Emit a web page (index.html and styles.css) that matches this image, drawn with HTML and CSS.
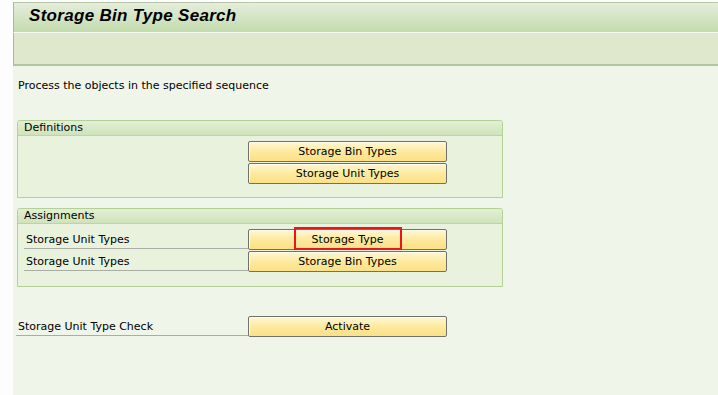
FILE: index.html
```html
<!DOCTYPE html>
<html lang="en">

<head>
    <meta charset="UTF-8">
    <meta name="viewport" content="width=device-width, initial-scale=1.0">
    <title>Storage Bin Type Search</title>

    <link rel="stylesheet" href="styles.css">
</head>

<body>
    <div class="gutter"></div>

    <div class="screen">
        <div class="title-bar">
            <h1>Storage Bin Type Search</h1>
        </div>
        <div class="toolbar"></div>

        <div class="content">
            <p class="intro">Process the objects in the specified sequence</p>

            <fieldset class="group">
                <legend>Definitions</legend>
                <ul>
                    <li>
                        <span class="spacer"></span>
                        <button>Storage Bin Types</button>
                    </li>
                    <li>
                        <span class="spacer"></span>
                        <button>Storage Unit Types</button>
                    </li>
                </ul>
            </fieldset>

            <fieldset class="group assignments">
                <legend>Assignments</legend>
                <ul>
                    <li>
                        <label>Storage Unit Types</label>
                        <button><span class="highlight">Storage Type</span></button>
                    </li>
                    <li>
                        <label>Storage Unit Types</label>
                        <button>Storage Bin Types</button>
                    </li>
                </ul>
            </fieldset>

            <div class="check-row">
                <label>Storage Unit Type Check</label>
                <button>Activate</button>
            </div>
        </div>
    </div>
</body>

</html>
```

FILE: styles.css
```css
* {
    margin: 0;
    padding: 0;
    box-sizing: border-box;
}

body {
    height: 100vh;
    display: flex;
    background-color: #ffffff;
    font-family: "DejaVu Sans", "Liberation Sans", sans-serif;
    font-size: 11px;
    color: #000000;
    overflow: hidden;
}

ul {
    list-style: none;
}

.gutter {
    width: 13px;
    flex-shrink: 0;
    background-color: #fcfdfc;
}

.screen {
    flex: 1;
    display: flex;
    flex-direction: column;
    background-color: #eff5e9;
    margin-top: 2px;
}

.title-bar {
    height: 31px;
    border-top: 1px solid #b6c7a7;
    border-left: 1px solid #a8bb98;
    border-bottom: 1px solid #f4f8ee;
    background: linear-gradient(#e4eddb, #c3dbad);
    display: flex;
    align-items: center;
    padding-left: 15px;
    padding-bottom: 3px;
}

h1 {
    font-family: "Liberation Sans", sans-serif;
    font-size: 17px;
    font-weight: bold;
    font-style: italic;
    letter-spacing: 0.3px;
}

.toolbar {
    height: 33px;
    background-color: #dfe7cd;
    border-left: 1px solid #a8bb98;
    border-bottom: 2px solid #b3c5a1;
}

.content {
    flex: 1;
    padding: 13px 0 0 3px;
    display: flex;
    flex-direction: column;
}

.intro {
    padding-left: 2px;
    line-height: 14px;
}

.group {
    width: 486px;
    margin: 27px 0 0 1px;
    border: 1px solid #b3d196;
    border-radius: 3px 3px 0 0;
    background-color: #e9f2dd;
    padding: 20px 0 13px 0;
    position: relative;
}

.group legend {
    position: absolute;
    top: 0;
    left: 0;
    right: 0;
    height: 15px;
    padding-left: 6px;
    line-height: 14px;
    background: linear-gradient(#e4efd6, #cfe3b9);
    border-bottom: 1px solid #bcd6a2;
    border-radius: 3px 3px 0 0;
}

.group.assignments {
    margin-top: 10px;
    padding-bottom: 14px;
}

.group ul {
    display: flex;
    flex-direction: column;
    gap: 1px;
}

.group li {
    display: flex;
    align-items: flex-end;
    padding-left: 6px;
}

.spacer,
label {
    width: 224px;
    flex-shrink: 0;
}

label {
    display: block;
    padding-left: 2px;
    line-height: 17px;
    border-bottom: 1px solid #a9ada4;
    margin-bottom: 1px;
}

button {
    width: 199px;
    height: 21px;
    font-family: inherit;
    font-size: 11px;
    color: #000000;
    background: linear-gradient(#fff7d4, #fde99b 55%, #fbe086);
    border: 1px solid #6f716c;
    border-radius: 2px;
    box-shadow: inset 1px 1px 0 #fffbe9;
}

.highlight {
    display: inline-block;
    width: 108px;
    height: 23px;
    margin-top: -3px;
    line-height: 21px;
    border: 2px solid #e8161a;
}

.check-row {
    display: flex;
    align-items: flex-end;
    margin-top: 29px;
}

.check-row label {
    width: 232px;
    padding-left: 2px;
}
```
